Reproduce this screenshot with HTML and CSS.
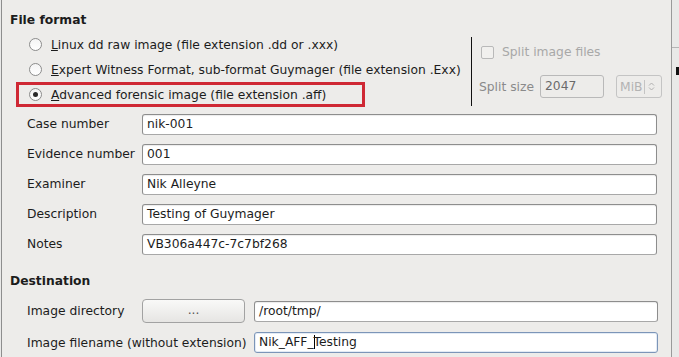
FILE: index.html
```html
<!DOCTYPE html>
<html>
<head>
    <title>Acquire image</title>
    <meta name="viewport" content="width=device-width, initial-scale=1">
    <link rel="stylesheet" href="styles.css">
</head>
<body>
    <div class="window">
        <div class="section-title">File format</div>

        <div class="format-block">
            <div class="format-list">
                <label class="radio-row">
                    <span class="radio"></span>
                    <span><u>L</u>inux dd raw image (file extension .dd or .xxx)</span>
                </label>
                <label class="radio-row">
                    <span class="radio"></span>
                    <span><u>E</u>xpert Witness Format, sub-format Guymager (file extension .Exx)</span>
                </label>
                <label class="radio-row highlight">
                    <span class="radio checked"></span>
                    <span><u>A</u>dvanced forensic image (file extension .aff)</span>
                </label>
            </div>

            <div class="separator"></div>

            <div class="split-panel">
                <div class="check-row">
                    <span class="checkbox"></span>
                    <span>Split image files</span>
                </div>
                <div class="split-row">
                    <span>Split size</span>
                    <span class="split-input">2047</span>
                    <span class="unit-select">
                        <span class="unit-text">MiB</span>
                        <span class="unit-arrows">
                            <svg width="7" height="11" viewBox="0 0 7 11">
                                <path d="M1 4.5 L3.5 2 L6 4.5 M1 6.5 L3.5 9 L6 6.5" fill="none" stroke="#b0b0b0" stroke-width="1"/>
                            </svg>
                        </span>
                    </span>
                </div>
            </div>
        </div>

        <div class="form">
            <div class="form-row">
                <span class="form-label">Case number</span>
                <span class="text-input">nik-001</span>
            </div>
            <div class="form-row">
                <span class="form-label">Evidence number</span>
                <span class="text-input">001</span>
            </div>
            <div class="form-row">
                <span class="form-label">Examiner</span>
                <span class="text-input">Nik Alleyne</span>
            </div>
            <div class="form-row">
                <span class="form-label">Description</span>
                <span class="text-input">Testing of Guymager</span>
            </div>
            <div class="form-row">
                <span class="form-label">Notes</span>
                <span class="text-input">VB306a447c-7c7bf268</span>
            </div>
        </div>

        <div class="section-title dest-title">Destination</div>

        <div class="dest">
            <div class="dest-row dir-row">
                <span class="form-label">Image directory</span>
                <span class="browse-btn">...</span>
                <span class="text-input">/root/tmp/</span>
            </div>
            <div class="dest-row">
                <span class="form-label wide">Image filename (without extension)</span>
                <span class="text-input focused">Nik_AFF_<span class="caret"></span>Testing</span>
            </div>
        </div>
    </div>

    <div class="side-strip">
        <div class="strip-top"></div>
        <div class="strip-mark"></div>
    </div>
</body>
</html>
```

FILE: styles.css
```css
html, body {
    margin: 0;
    height: 357px;
    overflow: hidden;
}

body {
    display: flex;
    background-color: #e9e9e8;
    font-family: "DejaVu Sans", sans-serif;
    font-size: 12.3px;
    color: #1c1c1c;
}

.window {
    flex: 0 0 auto;
    width: 661px;
    margin-left: 1px;
    padding: 9px 0 0 8px;
    background-color: #edecea;
    border-left: 1px solid #8e8e8e;
    border-right: 1px solid #9a9a9a;
}

.section-title {
    font-weight: bold;
    height: 22px;
    line-height: 22px;
}

/* file format block */
.format-block {
    display: flex;
    margin-top: 1px;
    margin-left: 6px;
    height: 75px;
}

.format-list {
    width: 455px;
    display: flex;
    flex-direction: column;
}

.radio-row {
    display: flex;
    align-items: center;
    gap: 9px;
    height: 25px;
    padding-left: 13px;
    box-sizing: border-box;
}

.radio-row.highlight {
    width: 349px;
    padding-left: 10px;
    border: 3px solid #cf2834;
}

.radio {
    width: 11px;
    height: 11px;
    border: 1px solid #8c8c8c;
    border-radius: 50%;
    background: linear-gradient(#f4f4f4, #ffffff);
    position: relative;
    flex: none;
}

.radio.checked::after {
    content: "";
    position: absolute;
    left: 3px;
    top: 3px;
    width: 5px;
    height: 5px;
    border-radius: 50%;
    background-color: #2a2a2a;
}

.separator {
    width: 1px;
    height: 69px;
    margin-top: 5px;
    background-color: #111;
}

.split-panel {
    display: flex;
    flex-direction: column;
    padding: 10px 0 0 7px;
    gap: 13px;
    color: #a8a8a8;
}

.check-row {
    display: flex;
    align-items: center;
    gap: 8px;
    height: 20px;
}

.checkbox {
    width: 11px;
    height: 11px;
    margin-left: 2px;
    border: 1px solid #b9b9b9;
    border-radius: 2px;
    background-color: #f1f0ee;
}

.split-row {
    display: flex;
    align-items: center;
    height: 23px;
    color: #8a8a8a;
}

.split-input {
    width: 58px;
    height: 21px;
    line-height: 21px;
    margin-left: 6px;
    padding-left: 4px;
    border: 1px solid #b9b9b9;
    border-radius: 3px;
    color: #6a6a6a;
}

.unit-select {
    display: flex;
    align-items: center;
    width: 41px;
    height: 21px;
    margin-left: 12px;
    padding-left: 3px;
    border: 1px solid #c4c4c4;
    border-radius: 3px;
    color: #b3b3b3;
}

.unit-text {
    padding-right: 1px;
    border-right: 1px solid #c4c4c4;
    line-height: 14px;
}

.unit-arrows {
    display: flex;
    margin-left: 3px;
}

/* metadata form */
.form {
    padding-left: 17px;
    margin-top: 2px;
}

.form-row,
.dest-row {
    display: flex;
    align-items: center;
    height: 30px;
}

.form-label {
    flex: none;
    width: 115px;
}

.form-label.wide {
    width: 227px;
}

.text-input {
    flex: none;
    box-sizing: border-box;
    width: 515px;
    height: 21px;
    line-height: 19px;
    padding-left: 4px;
    background-color: #fff;
    border: 1px solid #8d8d8d;
    border-bottom-color: #a8a8a8;
    border-radius: 3px;
    box-shadow: inset 0 1px 1px rgba(0, 0, 0, 0.08);
}

.dest-title {
    margin-top: 11px;
}

.dest {
    padding-left: 17px;
    margin-top: 7px;
}

.dir-row {
    height: 24px;
}

.dest-row .text-input {
    width: 404px;
}

.dest-row + .dest-row {
    margin-top: 8px;
    height: 23px;
}

.browse-btn {
    flex: none;
    box-sizing: border-box;
    width: 103px;
    height: 24px;
    line-height: 20px;
    margin-right: 9px;
    text-align: center;
    color: #555;
    border: 1px solid #a2a2a2;
    border-radius: 4px;
    background: linear-gradient(#f9f9f8, #e6e5e3);
}

.text-input.focused {
    border-color: #7c95b8;
    box-shadow: inset 0 0 0 1px #e3ebf5;
}

.caret {
    display: inline-block;
    width: 1px;
    height: 14px;
    margin-right: -1px;
    vertical-align: -3px;
    background-color: #000;
}

/* neighbouring window edge */
.side-strip {
    flex: 1;
    display: flex;
    flex-direction: column;
}

.strip-top {
    height: 47px;
    border-bottom: 1px solid #b5b5b5;
}

.strip-mark {
    width: 3px;
    height: 8px;
    margin: 19px 0 0 4px;
    background-color: #111;
}
```
